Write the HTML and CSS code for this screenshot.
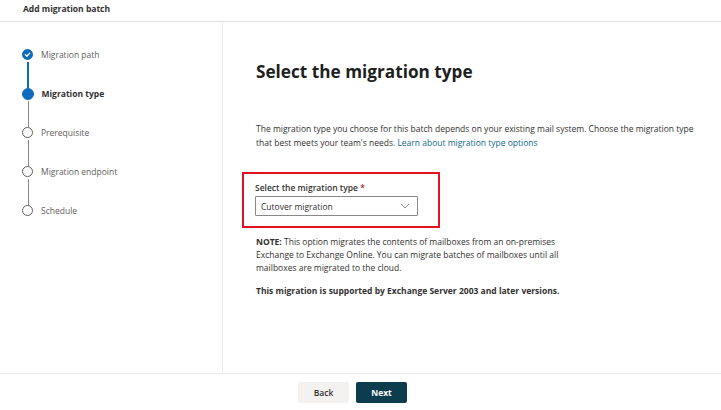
FILE: index.html
```html
<!DOCTYPE html>
<html>
<head>
    <title>Add migration batch</title>
    <meta name="viewport" content="width=device-width, initial-scale=1.0">
    <link rel="stylesheet" href="styles.css">
</head>
<body>
    <div class="panel">
        <div class="panel-header">Add migration batch</div>

        <div class="panel-body">
            <ul class="steps">
                <li class="step done">
                    <span class="dot">
                        <svg width="7" height="7" viewBox="0 0 8 8"><path d="M1.5 4.2 L3.3 6 L6.6 2.4" fill="none" stroke="#fff" stroke-width="1.4" stroke-linecap="round" stroke-linejoin="round"/></svg>
                    </span>
                    <span class="step-name">Migration path</span>
                </li>
                <li class="step current">
                    <span class="dot"></span>
                    <span class="step-name">Migration type</span>
                </li>
                <li class="step">
                    <span class="dot"></span>
                    <span class="step-name">Prerequisite</span>
                </li>
                <li class="step">
                    <span class="dot"></span>
                    <span class="step-name">Migration endpoint</span>
                </li>
                <li class="step last">
                    <span class="dot"></span>
                    <span class="step-name">Schedule</span>
                </li>
            </ul>

            <div class="content">
                <h1>Select the migration type</h1>
                <p class="intro">The migration type you choose for this batch depends on your existing mail system. Choose the migration type that best meets your team's needs. <a href="#">Learn about migration type options</a></p>

                <div class="highlight">
                    <label for="mtype">Select the migration type <span class="req">*</span></label>
                    <div class="dropdown" id="mtype">
                        <span>Cutover migration</span>
                        <svg width="10" height="6" viewBox="0 0 10 6"><path d="M1 1 L5 5 L9 1" fill="none" stroke="#8a8886" stroke-width="1"/></svg>
                    </div>
                </div>

                <p class="note"><b>NOTE:</b> This option migrates the contents of mailboxes from an on-premises Exchange to Exchange Online. You can migrate batches of mailboxes until all mailboxes are migrated to the cloud.</p>
                <p class="note"><b>This migration is supported by Exchange Server 2003 and later versions.</b></p>
            </div>
        </div>

        <div class="panel-footer">
            <button class="btn back">Back</button>
            <button class="btn next">Next</button>
        </div>
    </div>
</body>
</html>
```

FILE: styles.css
```css
body {
    margin: 0;
    font-family: "Open Sans", "Noto Sans", sans-serif;
    color: #323130;
    background-color: #fff;
}

.panel {
    width: 721px;
    height: 410px;
    display: flex;
    flex-direction: column;
}

.panel-header {
    height: 21px;
    padding-left: 23px;
    font-size: 8.5px;
    font-weight: bold;
    line-height: 17px;
    border-bottom: 1px solid #e1dfdd;
}

.panel-body {
    flex: 1;
    display: flex;
}

/* left step list */
.steps {
    width: 222px;
    margin: 0;
    padding: 27px 0 0 0;
    list-style: none;
    border-right: 1px solid #edebe9;
}

.step {
    position: relative;
    display: flex;
    align-items: flex-start;
    height: 39px;
    padding-left: 22px;
}

.step::after {
    content: "";
    position: absolute;
    left: 27.5px;
    top: 13px;
    width: 1px;
    height: 26px;
    background-color: #8a8886;
}

.step.done::after {
    background-color: #0f6cbd;
    width: 2px;
    left: 27px;
}

.step.last::after {
    display: none;
}

.dot {
    width: 9px;
    height: 9px;
    border: 1px solid #605e5c;
    border-radius: 50%;
    display: flex;
    align-items: center;
    justify-content: center;
    flex-shrink: 0;
}

.step.done .dot,
.step.current .dot {
    background-color: #0f6cbd;
    border-color: #0f6cbd;
}

.step.current .dot {
    width: 10px;
    height: 10px;
    margin-left: -0.5px;
}

.step-name {
    margin-left: 8px;
    font-size: 8.5px;
    line-height: 11px;
    color: #605e5c;
}

.step.current .step-name {
    font-weight: bold;
    color: #323130;
}

/* right side */
.content {
    flex: 1;
    padding: 0 0 0 33px;
}

h1 {
    margin: 38px 0 0 0;
    font-size: 17.2px;
    line-height: 24px;
    font-weight: bold;
    color: #201f1e;
}

.intro {
    margin: 38px 0 0 0;
    font-size: 8.5px;
    line-height: 14px;
    width: 450px;
}

a {
    color: #0f6a88;
    text-decoration: none;
}

.highlight {
    width: 163px;
    margin: 22px 0 0 -14px;
    padding: 8px 20px 10px 11px;
    border: 2px solid #e81123;
}

label {
    display: block;
    font-size: 8.5px;
    font-weight: 600;
    line-height: 12px;
    margin-bottom: 2px;
}

.req {
    color: #a4262c;
}

.dropdown {
    height: 18px;
    border: 1px solid #8a8886;
    border-radius: 1px;
    display: flex;
    align-items: center;
    justify-content: space-between;
    padding: 0 7px 0 5px;
    font-size: 8.5px;
}

.note {
    width: 320px;
    margin: 7px 0 0 0;
    font-size: 8.5px;
    line-height: 13px;
}

.note + .note {
    margin-top: 10px;
}

.panel-footer {
    height: 36px;
    border-top: 1px solid #edebe9;
    display: flex;
    align-items: center;
    padding-left: 298px;
    gap: 7px;
}

.btn {
    width: 51px;
    height: 21px;
    border: none;
    border-radius: 2px;
    font-family: "Open Sans", "Noto Sans", sans-serif;
    font-size: 8.5px;
    font-weight: 600;
    cursor: pointer;
}

.back {
    background-color: #f3f2f1;
    color: #323130;
}

.next {
    background-color: #0e3c4f;
    color: #fff;
    font-weight: bold;
}
```
